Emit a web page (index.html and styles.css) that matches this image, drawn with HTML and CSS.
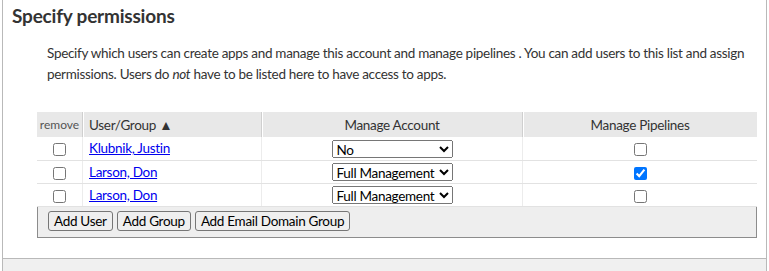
FILE: index.html
```html
<!DOCTYPE html>
<html lang="en">
    <head>
        <meta charset="utf-8">
        <link rel="stylesheet" href="styles.css">
    </head>
    <body>
        <div class="panel">
            <h2>Specify permissions</h2>
            <p class="intro">Specify which users can create apps and manage this account and manage pipelines . You can add users to this list and assign permissions. Users do <em>not</em> have to be listed here to have access to apps.</p>

            <table class="perms">
                <thead>
                    <tr>
                        <th class="col-remove">remove</th>
                        <th class="col-user">User/Group &#9650;</th>
                        <th class="col-account">Manage Account</th>
                        <th class="col-pipes">Manage Pipelines</th>
                    </tr>
                </thead>
                <tbody>
                    <tr>
                        <td class="center"><input type="checkbox"></td>
                        <td class="user"><a href="#">Klubnik, Justin</a></td>
                        <td class="center">
                            <select>
                                <option selected>No</option>
                                <option>Full Management</option>
                            </select>
                        </td>
                        <td class="center"><input type="checkbox"></td>
                    </tr>
                    <tr>
                        <td class="center"><input type="checkbox"></td>
                        <td class="user"><a href="#">Larson, Don</a></td>
                        <td class="center">
                            <select>
                                <option>No</option>
                                <option selected>Full Management</option>
                            </select>
                        </td>
                        <td class="center"><input type="checkbox" checked></td>
                    </tr>
                    <tr>
                        <td class="center"><input type="checkbox"></td>
                        <td class="user"><a href="#">Larson, Don</a></td>
                        <td class="center">
                            <select>
                                <option>No</option>
                                <option selected>Full Management</option>
                            </select>
                        </td>
                        <td class="center"><input type="checkbox"></td>
                    </tr>
                </tbody>
            </table>
            <div class="perms-foot">
                <button type="button">Add User</button>
                <button type="button">Add Group</button>
                <button type="button">Add Email Domain Group</button>
            </div>
        </div>
        <div class="panel-next"></div>
    </body>
</html>
```

FILE: styles.css
```css
*{
    margin:0;
    padding:0;
}
body{
    background:#fff;
    font-family: Lato, "Liberation Sans", sans-serif;
    color:#333;
}
.panel{
    margin:0 2px 0 2px;
    border:1px solid #b9b9b9;
    border-top:0;
    padding:0 8px 20px 9px;
}
.panel h2{
    font-size:19px;
    font-weight:bold;
    line-height:32px;
    color:#333;
    letter-spacing:-0.2px;
}
.intro{
    margin:11px 0 0 35px;
    width:705px;
    font-size:13.5px;
    letter-spacing:-0.3px;
    line-height:21px;
    color:#333;
}
.perms{
    margin:27px 0 0 25px;
    width:720px;
    border-collapse:collapse;
    table-layout:fixed;
    font-size:13.5px;
    letter-spacing:-0.3px;
}
.perms thead tr{
    height:25px;
}
.perms th{
    background:#e8e8e8;
    font-weight:normal;
    color:#333;
    text-align:center;
    padding:0;
}
.perms th + th{
    border-left:1px solid #cfcfcf;
    box-shadow: inset 1px 0 #fff;
}
.perms .col-remove{
    width:45px;
    font-size:12px;
    letter-spacing:0;
    color:#555;
}
.perms .col-user{
    width:172px;
    text-align:left;
    padding-left:6px;
}
.perms .col-account{
    width:260px;
}
.perms tbody tr{
    height:23px;
}
.perms td{
    border-bottom:1px solid #e2e2e2;
    padding:0;
}
.perms td + td{
    border-left:1px solid #ececec;
}
.perms td.center{
    text-align:center;
}
.perms td.user{
    padding-left:6px;
}
.perms a{
    color:#0000ee;
}
.perms input[type=checkbox]{
    vertical-align:middle;
    margin:0;
}
.perms select{
    width:121px;
    height:18px;
    font-family: Lato, "Liberation Sans", sans-serif;
    font-size:13.5px;
    letter-spacing:-0.3px;
    color:#000;
    vertical-align:middle;
}
.perms-foot{
    margin-left:25px;
    width:720px;
    box-sizing:border-box;
    background:#eee;
    border:1px solid #8c8c8c;
    border-top:0;
    padding:3px 10px 6px;
}
.perms-foot button{
    height:20px;
    padding:0 5px;
    font-family: Lato, "Liberation Sans", sans-serif;
    font-size:13.5px;
    letter-spacing:-0.3px;
    color:#000;
    background:#efefef;
    border:1px solid #767676;
    border-radius:3px;
}
.panel-next{
    margin:0 2px;
    height:20px;
    background:#f0f0f0;
    border-left:1px solid #b9b9b9;
    border-right:1px solid #b9b9b9;
}
```
